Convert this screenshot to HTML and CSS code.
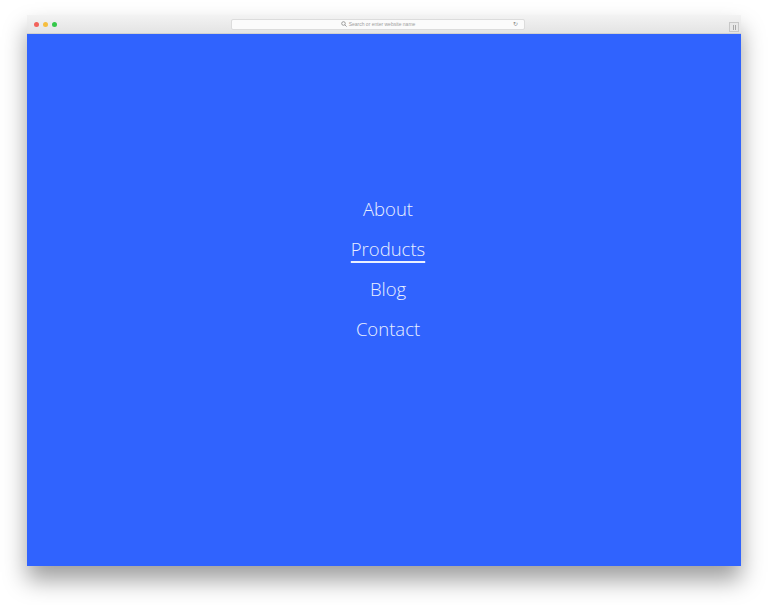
FILE: index.html
```html
<!DOCTYPE html>
<html>
<head>
<meta charset="utf-8">
<link rel="stylesheet" href="styles.css">
</head>
<body>
<div class="window">
  <div class="toolbar">
    <div class="lights">
      <span class="light red"></span>
      <span class="light yellow"></span>
      <span class="light green"></span>
    </div>
    <div class="address">
      <svg class="search" width="6" height="6" viewBox="0 0 6 6"><circle cx="2.5" cy="2.5" r="1.8" fill="none" stroke="#888" stroke-width="0.8"/><line x1="3.8" y1="3.8" x2="5.6" y2="5.6" stroke="#888" stroke-width="0.8"/></svg>
      <span class="placeholder">Search or enter website name</span>
      <span class="reload">&#8635;</span>
    </div>
    <div class="sidebtn"><span></span><span></span></div>
  </div>
  <div class="stage">
    <nav class="menu">
      <a class="item">About</a>
      <a class="item active">Products</a>
      <a class="item">Blog</a>
      <a class="item">Contact</a>
    </nav>
  </div>
</div>
</body>
</html>
```
FILE: styles.css
```css
html, body {
  margin: 0;
  padding: 0;
  background: #ffffff;
}
body {
  width: 768px;
  height: 605px;
  overflow: hidden;
}
.window {
  margin: 15px 0 0 27px;
  width: 714px;
  box-shadow: 0 14px 22px rgba(0, 0, 0, 0.38);
}
.toolbar {
  height: 18px;
  background: linear-gradient(#f3f3f3, #e4e4e4);
  border-bottom: 1px solid #d0d0d0;
  display: flex;
  align-items: center;
  position: relative;
}
.lights {
  display: flex;
  gap: 4px;
  margin-left: 7px;
  width: 197px;
}
.light {
  width: 5px;
  height: 5px;
  border-radius: 50%;
}
.red { background: #f2625b; }
.yellow { background: #f6be3f; }
.green { background: #35c84a; }
.address {
  width: 294px;
  height: 11px;
  background: #fbfbfb;
  border: 1px solid #dcdcdc;
  border-radius: 2px;
  box-sizing: border-box;
  display: flex;
  align-items: center;
  justify-content: center;
  position: relative;
  font-family: "Liberation Sans", Arial, sans-serif;
  font-size: 5px;
  color: #a0a0a0;
  gap: 2px;
}
.reload {
  position: absolute;
  right: 6px;
  top: 0;
  font-size: 6px;
  line-height: 9px;
  color: #888;
}
.sidebtn {
  margin-left: auto;
  margin-right: 2px;
  width: 10px;
  height: 10px;
  margin-top: 6px;
  background: #e8e8e8;
  border: 1px solid #c8c8c8;
  box-sizing: border-box;
  display: flex;
  justify-content: center;
  gap: 1px;
  padding-top: 2px;
}
.sidebtn span {
  width: 1px;
  height: 5px;
  background: #a8a8a8;
}
.stage {
  height: 532px;
  background: #3063fe;
  box-sizing: border-box;
  padding-top: 155px;
  padding-left: 8px;
}
.menu {
  display: flex;
  flex-direction: column;
  align-items: center;
  font-family: "Open Sans", "Noto Sans", sans-serif;
  font-weight: 300;
  font-size: 18.5px;
  line-height: 40px;
  color: #eaf0ff;
}
.item {
  display: block;
}
.active {
  text-decoration: underline;
  text-decoration-thickness: 2px;
  text-underline-offset: 5px;
}
```
